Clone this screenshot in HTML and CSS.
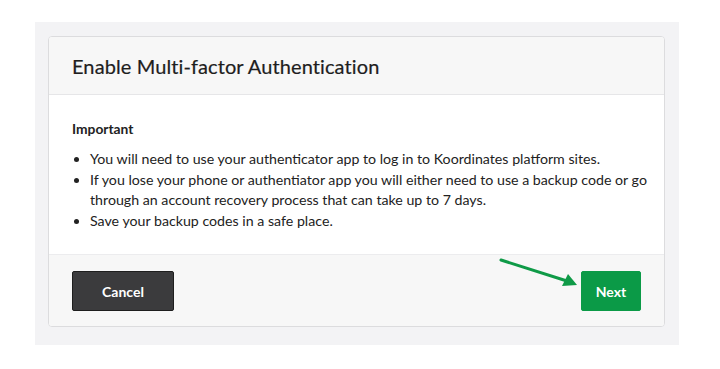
FILE: index.html
```html
<!DOCTYPE html>
<html>
<head>
<meta charset="utf-8">
<link rel="stylesheet" href="styles.css">
</head>
<body>
<div class="panel">
  <div class="card">
    <div class="card-header">
      <h1 class="title">Enable Multi-factor Authentication</h1>
    </div>
    <div class="card-body">
      <p class="label">Important</p>
      <ul class="points">
        <li>You will need to use your authenticator app to log in to Koordinates platform sites.</li>
        <li>If you lose your phone or authentiator app you will either need to use a backup code or go through an account recovery process that can take up to 7 days.</li>
        <li>Save your backup codes in a safe place.</li>
      </ul>
    </div>
    <div class="card-footer">
      <button class="btn btn-cancel">Cancel</button>
      <div class="next-wrap">
        <svg class="arrow" width="82" height="30" viewBox="0 0 82 30">
          <line x1="2" y1="2" x2="68" y2="23" stroke="#0f9a47" stroke-width="3" stroke-linecap="round"/>
          <polygon points="78,27 63,28 69,16" fill="#0f9a47"/>
        </svg>
        <button class="btn btn-next">Next</button>
      </div>
    </div>
  </div>
</div>
</body>
</html>
```

FILE: styles.css
```css
html, body {
  margin: 0;
  padding: 0;
  background: #ffffff;
}
body {
  padding: 22px 0 0 35px;
  font-family: "Lato", "Noto Sans", sans-serif;
  color: #222;
}
.panel {
  width: 644px;
  height: 323px;
  box-sizing: border-box;
  background: #f3f3f5;
  padding: 14px 0 0 13px;
}
.card {
  width: 617px;
  box-sizing: border-box;
  border: 1px solid #dcdcde;
  border-radius: 4px;
  background: #fff;
  overflow: hidden;
}
.card-header {
  height: 58px;
  box-sizing: border-box;
  background: #f7f7f7;
  border-bottom: 1px solid #e6e6e8;
  padding: 0 23px;
  display: flex;
  align-items: center;
}
.title {
  margin: 0;
  font-size: 20px;
  font-weight: 400;
  color: #1e1e1e;
  letter-spacing: 0.1px;
  -webkit-text-stroke: 0.2px #1e1e1e;
}
.card-body {
  height: 160px;
  box-sizing: border-box;
  padding: 24px 4px 0 23px;
  background: #fff;
  border-bottom: 1px solid #ececee;
}
.label {
  margin: 0 0 10px 0;
  font-size: 13.8px;
  font-weight: 700;
  line-height: 20px;
}
.points {
  margin: 0;
  padding-left: 18px;
  font-size: 14.2px;
  line-height: 20px;
}
.points li + li {
  margin-top: 1px;
}
.card-footer {
  height: 71px;
  box-sizing: border-box;
  background: #f7f7f7;
  padding: 16px 23px 0 23px;
  display: flex;
  justify-content: space-between;
  align-items: flex-start;
}
.btn {
  height: 40px;
  border-radius: 2px;
  font-family: inherit;
  font-size: 14px;
  font-weight: 700;
  color: #fff;
  cursor: pointer;
}
.btn-cancel {
  width: 102px;
  background: #3b3b3d;
  border: 1px solid #1e1e1e;
}
.btn-next {
  width: 60px;
  background: #0b9a47;
  border: 1px solid #0b9a47;
}
.next-wrap {
  position: relative;
}
.arrow {
  position: absolute;
  left: -82px;
  top: -13px;
}
```
